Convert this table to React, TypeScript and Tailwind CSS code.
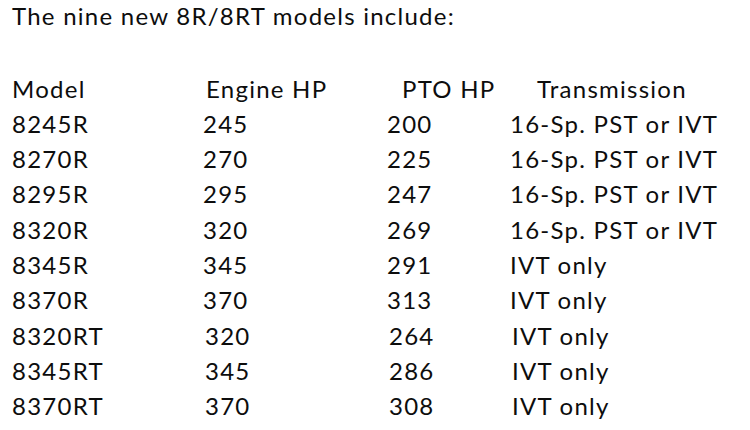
const rows = [
  { model: "8245R", engine: "245", pto: "200", trans: "16-Sp. PST or IVT", rt: false },
  { model: "8270R", engine: "270", pto: "225", trans: "16-Sp. PST or IVT", rt: false },
  { model: "8295R", engine: "295", pto: "247", trans: "16-Sp. PST or IVT", rt: false },
  { model: "8320R", engine: "320", pto: "269", trans: "16-Sp. PST or IVT", rt: false },
  { model: "8345R", engine: "345", pto: "291", trans: "IVT only", rt: false },
  { model: "8370R", engine: "370", pto: "313", trans: "IVT only", rt: false },
  { model: "8320RT", engine: "320", pto: "264", trans: "IVT only", rt: true },
  { model: "8345RT", engine: "345", pto: "286", trans: "IVT only", rt: true },
  { model: "8370RT", engine: "370", pto: "308", trans: "IVT only", rt: true },
];

const App = () => {
  return (
    <div
      className="w-[750px] h-[430px] bg-white text-[#0d0d0d] text-[24px] leading-[35.3px] tracking-[1.25px] pl-3 overflow-hidden"
      style={{ fontFamily: "Lato, 'Liberation Sans', sans-serif" }}
    >
      <p className="leading-[31px]">The nine new 8R/8RT models include:</p>
      <div className="h-[39.6px]"></div>

      {/* header */}
      <div className="flex">
        <div className="w-[191px]">Model</div>
        <div className="w-[184px] pl-[3px]">Engine HP</div>
        <div className="w-[123px] pl-[15px]">PTO HP</div>
        <div className="pl-[27px]">Transmission</div>
      </div>

      {rows.map((r) => (
        <div key={r.model} className="flex">
          <div className="w-[191px]">{r.model}</div>
          <div className={r.rt ? "w-[184px] pl-[2px]" : "w-[184px]"}>{r.engine}</div>
          <div className={r.rt ? "w-[123px] pl-[2px]" : "w-[123px]"}>{r.pto}</div>
          <div className={r.rt ? "pl-[2px]" : ""}>{r.trans}</div>
        </div>
      ))}
    </div>
  );
};

export default App;
